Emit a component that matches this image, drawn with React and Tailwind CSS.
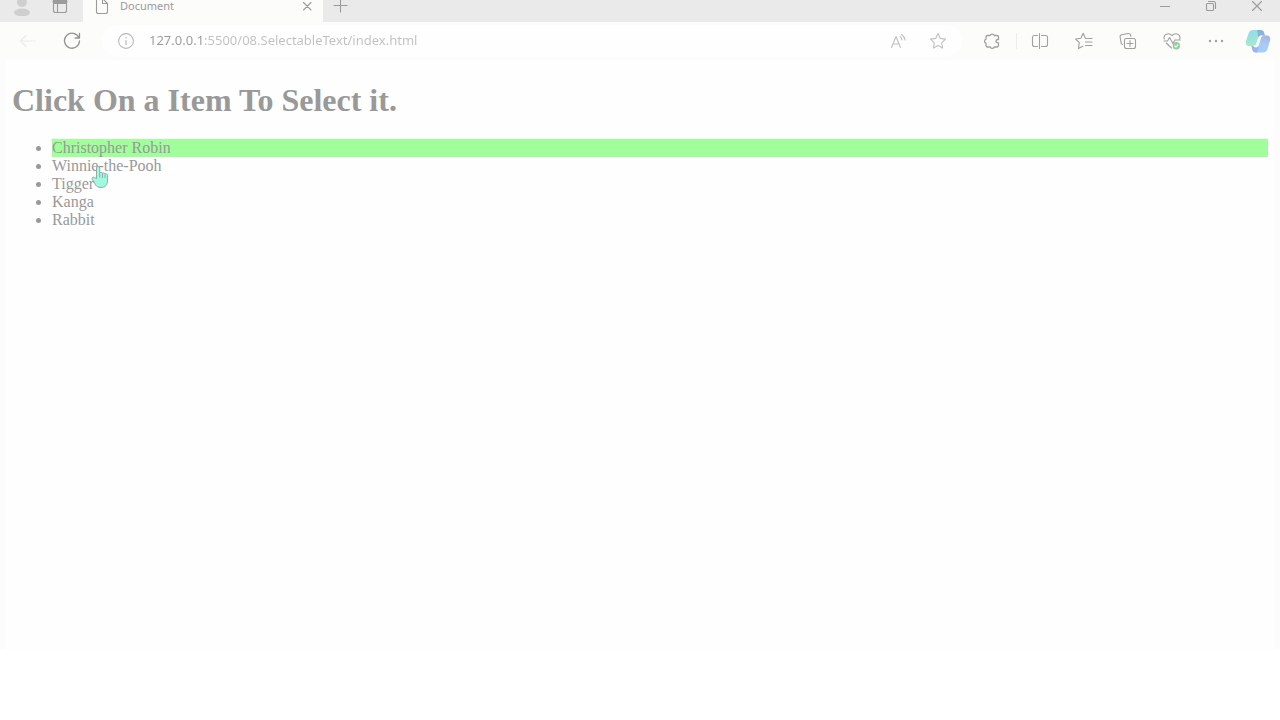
import { useState } from 'react';

const items = ['Christopher Robin', 'Winnie-the-Pooh', 'Tigger', 'Kanga', 'Rabbit'];

function Icon({ size = 18, children, className = '' }) {
  return (
    <svg
      width={size}
      height={size}
      viewBox={`0 0 ${size} ${size}`}
      fill="none"
      stroke="currentColor"
      strokeWidth="1.1"
      strokeLinecap="round"
      strokeLinejoin="round"
      className={`shrink-0 ${className}`}
      aria-hidden="true"
    >
      {children}
    </svg>
  );
}

function IconButton({ label, className = 'w-11', children }) {
  return (
    <button
      type="button"
      aria-label={label}
      className={`flex h-8 shrink-0 items-center justify-center ${className}`}
    >
      {children}
    </button>
  );
}

function TabStrip() {
  return (
    <header className="flex h-[22px] items-end overflow-hidden bg-[#eaeaea] text-[#9b9b9b]">
      <div className="flex h-8 w-full shrink-0 items-center">
        <IconButton label="Profile">
          <Icon size={20}>
            <g fill="#cfcfcd" stroke="none">
              <circle cx="10" cy="6" r="5" />
              <ellipse cx="10" cy="16.5" rx="8" ry="4" />
            </g>
          </Icon>
        </IconButton>
        <IconButton label="Tab actions" className="w-8">
          <Icon>
            <rect x="2.5" y="2.5" width="13" height="13" rx="2" />
            <path d="M2.5 6.5h13M6.5 6.5v9" />
            <path d="M3 4.5h12" strokeWidth="3" />
          </Icon>
        </IconButton>

        {/* Active tab */}
        <div className="ml-[7px] flex h-8 w-60 items-center bg-[#fcfcfa] pr-2 pl-2.5">
          <Icon>
            <path d="M3.5 1.5h6l5 5v8a2 2 0 0 1-2 2h-7a2 2 0 0 1-2-2zM9.5 1.5v5h5" />
          </Icon>
          <span className="ml-[9px] flex-1 font-['Noto_Sans',sans-serif] text-[11px] leading-3">
            Document
          </span>
          <IconButton label="Close tab" className="w-4">
            <Icon size={16}>
              <path d="M4.5 4.5l7.500 7.500M12 4.5l-7.500 7.500" />
            </Icon>
          </IconButton>
        </div>
        <IconButton label="New tab" className="w-[34px]">
          <Icon>
            <path d="M3 8.5h13M9.500 2v13" />
          </Icon>
        </IconButton>

        {/* Window controls */}
        <div className="ml-auto flex">
          <IconButton label="Minimize" className="w-[46px]">
            <Icon size={16}>
              <path d="M3.5 8.5h9" />
            </Icon>
          </IconButton>
          <IconButton label="Restore" className="w-[46px]">
            <Icon size={16}>
              <rect x="3.5" y="5.5" width="7" height="7" rx="1" />
              <path d="M5.5 3.5h5a2 2 0 0 1 2 2v5" />
            </Icon>
          </IconButton>
          <IconButton label="Close" className="w-[46px]">
            <Icon size={16}>
              <path d="M3.5 3.5l9 9M12.5 3.5l-9 9" />
            </Icon>
          </IconButton>
        </div>
      </div>
    </header>
  );
}

function Copilot() {
  return (
    <svg width="26" height="24" viewBox="0 0 26 24" aria-hidden="true">
      <defs>
        <linearGradient id="copilot-left" x1="0" y1="0" x2="0.3" y2="1">
          <stop offset="0" stopColor="#9cd8ec" />
          <stop offset="0.5" stopColor="#98e2de" />
          <stop offset="1" stopColor="#a6ecc6" />
        </linearGradient>
        <linearGradient id="copilot-right" x1="0.6" y1="0" x2="0.3" y2="1">
          <stop offset="0" stopColor="#a9b4e4" />
          <stop offset="0.5" stopColor="#a6cdf6" />
          <stop offset="1" stopColor="#9fd0f5" />
        </linearGradient>
      </defs>
      <path
        d="M8 1h7.500c2 0 3 1 3.500 2.500l.8 3H17c-2 0-3 1-3.600 3l-1.400 4.500c-.6 2-1.700 3-3.500 3H4.500c-3 0-4.300-2-3.500-5L3.500 4.500C4.200 2.300 5.700 1 8 1z"
        fill="url(#copilot-left)"
      />
      <path
        d="M18 23.500h-7c-2 0-3-1-3.500-2.500L6.500 17h2c2 0 3-1 3.600-3l1.400-4.500c.6-2 1.700-3 3.500-3h4.500c3 0 4.300 2 3.500 5L22.500 20c-.7 2.200-2.200 3.500-4.500 3.500z"
        fill="url(#copilot-right)"
      />
      <path d="M12 1h3.500c2 0 3 1 3.500 2.500l.8 3H17c-1.800 0-2.900.9-3.500 2.500z" fill="#86b4dc" />
      <path d="M6.500 17h2c2 0 3-1 3.600-3l1.400 5-1.500 4.500h-1c-2 0-3-1-3.500-2.500z" fill="#9db5ee" />
      <path
        d="M16.800 6.800c-1.800 0-2.800.8-3.400 2.700l-1.600 5c-.5 1.600-1.500 2.500-3 2.500.8.500 1.500 1 2.200 1 1.300 0 2-.8 2.400-2.200l2-6.300c.4-1.400.9-2.200 1.900-2.700z"
        fill="#fcfcfa"
        stroke="#fcfcfa"
      />
    </svg>
  );
}

function Toolbar() {
  return (
    <nav className="flex h-[38px] items-center bg-[#fcfcfa] pr-0.5 pl-1.5 text-[#a0a09e]">
      <IconButton label="Back">
        <Icon className="text-[#ebebe9]">
          <path d="M1.500 9h15M7 3.500L1.500 9 7 14.500" />
        </Icon>
      </IconButton>
      <IconButton label="Refresh">
        <Icon className="text-[#949492]">
          <path d="M15.800 5.500A7.500 7.500 0 1 0 16.500 9M16.500 1.500v4.500h-4.500" strokeWidth="1.300" />
        </Icon>
      </IconButton>

      {/* Address bar */}
      <div className="mx-2 flex h-8 flex-1 items-center rounded-full bg-[#fefefe] pr-1 pl-4">
        <Icon size={16} className="text-[#b9b9b7]">
          <circle cx="8" cy="8" r="7.400" />
          <path d="M8 7.500v4M8 4.500v.4" strokeWidth="1.200" />
        </Icon>
        <input
          type="text"
          aria-label="Address"
          defaultValue="127.0.0.1:5500/08.SelectableText/index.html"
          className="ml-[15px] min-w-0 flex-1 bg-linear-to-r from-[#999999] from-[54px] to-[#c0c0be] to-[54px] bg-clip-text font-['Noto_Sans',sans-serif] text-[13px] text-transparent outline-none"
        />
        <IconButton label="Read aloud" className="w-10 text-[#c0c0be]">
          <Icon>
            <path d="M2.500 15.500l4.500-11 4.500 11M4 12h6M11 4.500a5 5 0 0 1 2 3.500M12.500 2.500a7.500 7.500 0 0 1 3.500 5.500" />
          </Icon>
        </IconButton>
        <IconButton label="Add to favorites" className="w-10 text-[#c0c0be]">
          <Icon>
            <path d="M9 1.500l2.300 4.900 5.200.7-3.800 3.700.9 5.300L9 13.600l-4.600 2.500.9-5.300-3.800-3.700 5.200-.7z" />
          </Icon>
        </IconButton>
      </div>

      <IconButton label="Extensions">
        <Icon>
          <path
            d="M4.500 3.500h2.700a2.100 2.100 0 0 1 4 0h2.800a1.500 1.500 0 0 1 1.500 1.500v2.500h-.8a1.700 1.700 0 0 0 0 3.400h.8V13.500a1.500 1.500 0 0 1-1.500 1.500h-2.800a2.100 2.100 0 0 1-4 0H4.500A1.500 1.500 0 0 1 3 13.500v-2.300a2.100 2.100 0 0 1 0-4V5a1.500 1.500 0 0 1 1.500-1.500z"
            strokeWidth="1.300"
          />
        </Icon>
      </IconButton>
      <div className="flex w-1 justify-center">
        <span className="h-4 w-px bg-[#eeeeec]" />
      </div>
      <IconButton label="Split screen">
        <Icon>
          <path d="M6.500 3.500h-3a2 2 0 0 0-2 2v7a2 2 0 0 0 2 2h3M10.500 3.500h4a2 2 0 0 1 2 2v7a2 2 0 0 1-2 2h-4M8.500 1.500v15" />
        </Icon>
      </IconButton>
      <IconButton label="Favorites">
        <Icon>
          <path d="M10.500 6.400L8.200 1.300 5.900 6.300.6 7l3.700 3.700-.9 5.800 4.400-2.300M11.500 6.500h5.500M10.500 10h6.500M10.500 13.500h6.500" />
        </Icon>
      </IconButton>
      <IconButton label="Collections">
        <Icon>
          <rect x="5.500" y="6.500" width="11" height="10" rx="2" />
          <path d="M11 8.500v6M8 11.500h6M3.500 12.500a2 2 0 0 1-1.400-1.600L1.100 5a2 2 0 0 1 1.600-2.300l6.500-1.200A2 2 0 0 1 11.500 3l.3 1.300" />
        </Icon>
      </IconButton>
      <IconButton label="Browser essentials">
        <Icon>
          <path d="M1.300 7C-.2 2.500 5.500-.3 9 3.700c3.500-4 9.200-1.200 7.700 3.300M3.200 11L8.500 16M1 9h3.500l2-3.500 3.500 6 2-3.500h5" />
          <circle cx="13.300" cy="13.800" r="3.700" fill="#8fd299" stroke="none" />
          <path d="M11.700 13.900l1.200 1.200 2-2.300" stroke="#fff" />
        </Icon>
      </IconButton>
      <IconButton label="Settings and more">
        <Icon>
          <g fill="currentColor" stroke="none">
            <circle cx="3" cy="9" r="1.200" />
            <circle cx="9" cy="9" r="1.200" />
            <circle cx="15" cy="9" r="1.200" />
          </g>
        </Icon>
      </IconButton>
      <IconButton label="Copilot" className="w-10">
        <Copilot />
      </IconButton>
    </nav>
  );
}

function HandPointer() {
  return (
    <svg
      width="18"
      height="24"
      viewBox="0 0 18 24"
      className="pointer-events-none absolute top-2 left-[39px]"
      aria-hidden="true"
    >
      <path
        d="M5.500 13.500V3a1.600 1.600 0 0 1 3.200 0v5c.8-1 2.400-.7 2.700.3.900-.8 2.400-.4 2.600.7 1-.5 2.500 0 2.500 1.400V15.500c0 4.500-2.300 7-6.500 7-3.700 0-5-1.500-6.300-4.200L1.300 14.300c-.8-1.700 1-2.800 2.200-1.800z"
        fill="#a0fae0"
        stroke="#93aaa6"
        strokeLinejoin="round"
      />
      <path d="M8.700 8v4.500M11.400 8.500V13M14 9.500V13" stroke="#93aaa6" />
    </svg>
  );
}

export default function App() {
  const [selected, setSelected] = useState(items[0]);

  return (
    <div className="min-h-screen bg-white">
      <TabStrip />
      <Toolbar />
      <div className="bg-[#fcfcfc] px-1.5">
        <main className="min-h-[590px] bg-[#fefefe] px-1.5 pt-5 font-['Liberation_Serif',serif] text-[#999999]">
          <h1 className="text-[32px] leading-10 font-bold">Click On a Item To Select it.</h1>
          <ul className="mt-[19px] list-disc pl-10 text-base leading-[18px]">
            {items.map((item) => (
              <li
                key={item}
                onClick={() => setSelected(item)}
                className={item === selected ? 'relative cursor-pointer bg-[#a0ff9b]' : 'relative cursor-pointer'}
              >
                {item}
                {item === 'Winnie-the-Pooh' && <HandPointer />}
              </li>
            ))}
          </ul>
        </main>
      </div>
    </div>
  );
}
